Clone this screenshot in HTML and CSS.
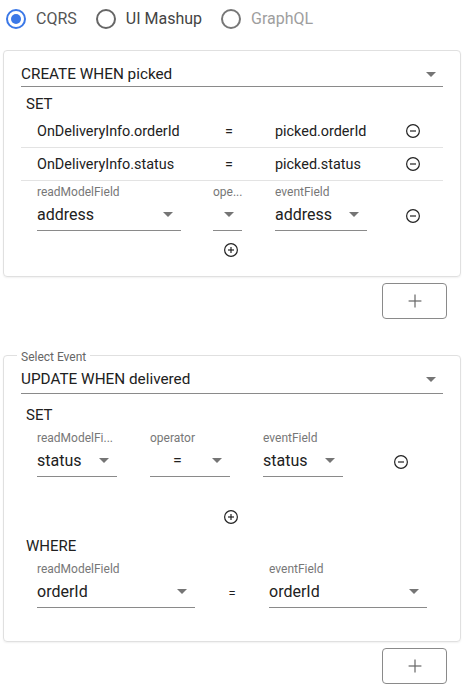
FILE: index.html
```html
<!DOCTYPE html>
<html>
<head>
<meta charset="utf-8">
<link rel="stylesheet" href="styles.css">
</head>
<body>
<div class="page">
  <div class="radios">
    <label class="radio checked"><span class="ring"><span class="dot"></span></span><span class="rlabel">CQRS</span></label>
    <label class="radio"><span class="ring"></span><span class="rlabel">UI Mashup</span></label>
    <label class="radio disabled"><span class="ring"></span><span class="rlabel">GraphQL</span></label>
  </div>

  <div class="card card1">
    <div class="select main-select"><span class="val">CREATE WHEN picked</span><span class="arrow"></span></div>
    <div class="section s1">SET</div>
    <div class="fixed-row">
      <span class="c1">OnDeliveryInfo.orderId</span><span class="c2">=</span><span class="c3">picked.orderId</span>
      <svg class="icon" viewBox="0 0 24 24"><circle cx="12" cy="12" r="8.5"/><line x1="8" y1="12" x2="16" y2="12"/></svg>
    </div>
    <div class="fixed-row">
      <span class="c1">OnDeliveryInfo.status</span><span class="c2">=</span><span class="c3">picked.status</span>
      <svg class="icon" viewBox="0 0 24 24"><circle cx="12" cy="12" r="8.5"/><line x1="8" y1="12" x2="16" y2="12"/></svg>
    </div>
    <div class="edit-row er1">
      <div class="field w144"><div class="flabel">readModelField</div><div class="fsel"><span>address</span><span class="arrow"></span></div></div>
      <div class="field w29"><div class="flabel">ope...</div><div class="fsel"><span></span><span class="arrow"></span></div></div>
      <div class="field w92"><div class="flabel">eventField</div><div class="fsel"><span>address</span><span class="arrow"></span></div></div>
      <svg class="icon eicon" viewBox="0 0 24 24"><circle cx="12" cy="12" r="8.5"/><line x1="8" y1="12" x2="16" y2="12"/></svg>
    </div>
    <div class="add-row a1"><svg class="icon" viewBox="0 0 24 24"><circle cx="12" cy="12" r="8.5"/><line x1="8" y1="12" x2="16" y2="12"/><line x1="12" y1="8" x2="12" y2="16"/></svg></div>
  </div>
  <div class="btn-row"><button class="add-btn"><svg viewBox="0 0 20 20"><line x1="2" y1="10" x2="18" y2="10"/><line x1="10" y1="2" x2="10" y2="18"/></svg></button></div>

  <div class="card card2">
    <div class="legend">Select Event</div>
    <div class="select main-select ms2"><span class="val">UPDATE WHEN delivered</span><span class="arrow"></span></div>
    <div class="section s2">SET</div>
    <div class="edit-row er2">
      <div class="field w80"><div class="flabel">readModelFi...</div><div class="fsel"><span>status</span><span class="arrow"></span></div></div>
      <div class="field w80"><div class="flabel">operator</div><div class="fsel center"><span>=</span><span class="arrow"></span></div></div>
      <div class="field w80"><div class="flabel">eventField</div><div class="fsel"><span>status</span><span class="arrow"></span></div></div>
      <svg class="icon eicon2" viewBox="0 0 24 24"><circle cx="12" cy="12" r="8.5"/><line x1="8" y1="12" x2="16" y2="12"/></svg>
    </div>
    <div class="add-row a2"><svg class="icon" viewBox="0 0 24 24"><circle cx="12" cy="12" r="8.5"/><line x1="8" y1="12" x2="16" y2="12"/><line x1="12" y1="8" x2="12" y2="16"/></svg></div>
    <div class="section s3">WHERE</div>
    <div class="edit-row er3">
      <div class="field w158"><div class="flabel">readModelField</div><div class="fsel"><span>orderId</span><span class="arrow"></span></div></div>
      <div class="eq">=</div>
      <div class="field w158"><div class="flabel">eventField</div><div class="fsel"><span>orderId</span><span class="arrow"></span></div></div>
    </div>
  </div>
  <div class="btn-row"><button class="add-btn"><svg viewBox="0 0 20 20"><line x1="2" y1="10" x2="18" y2="10"/><line x1="10" y1="2" x2="10" y2="18"/></svg></button></div>
</div>
</body>
</html>
```

FILE: styles.css
```css
* { box-sizing: border-box; }
body {
  margin: 0;
  font-family: Roboto, "Noto Sans", sans-serif;
  color: #212121;
  background: #fff;
}
.page { padding: 0 13px 0 3px; }

.radios {
  display: flex;
  align-items: center;
  height: 37px;
  padding-left: 3px;
}
.radio {
  display: flex;
  align-items: center;
  margin-right: 19px;
  font-size: 16px;
  color: #555;
}
.ring {
  width: 20px;
  height: 20px;
  border: 2px solid #666;
  border-radius: 50%;
  display: flex;
  align-items: center;
  justify-content: center;
}
.radio.checked .ring { border-color: #3b78e7; }
.dot { width: 10px; height: 10px; border-radius: 50%; background: #3b78e7; }
.rlabel { margin-left: 10px; }
.radio.disabled { color: #9e9e9e; }
.radio.disabled .ring { border-color: #777; }
.radio:nth-child(2) .rlabel { color: #444; }

.card {
  border: 1px solid #e0e0e0;
  border-radius: 4px;
  box-shadow: 0 1px 2px rgba(0,0,0,0.06);
  padding: 0 17px;
  position: relative;
}
.card1 { margin-top: 13px; height: 227px; padding-top: 10px; }
.card2 { margin-top: 36px; height: 287px; padding-top: 12px; }

.legend {
  position: absolute;
  top: -6px;
  left: 13px;
  padding: 0 4px;
  background: #fff;
  font-size: 12px;
  line-height: 14px;
  color: #666;
}

.select {
  display: flex;
  align-items: center;
  justify-content: space-between;
  border-bottom: 1px solid #8a8a8a;
}
.main-select { height: 26px; font-size: 15.3px; padding-right: 7px; }
.card1 .main-select { padding-top: 1px; }
.ms2 { padding-bottom: 3px; }
.arrow {
  width: 0; height: 0;
  border-left: 5px solid transparent;
  border-right: 5px solid transparent;
  border-top: 5px solid #757575;
}
.section {
  font-size: 15px;
  line-height: 18px;
  padding-left: 5px;
  display: flex;
  align-items: flex-end;
}
.s1 { height: 28px; padding-bottom: 2px; }
.s2 { height: 35px; padding-bottom: 5px; }
.s3 { height: 28px; }

.fixed-row {
  display: flex;
  align-items: center;
  height: 33px;
  border-bottom: 1px solid #e3e3e3;
  font-size: 14.4px;
  padding-left: 16px;
}
.fixed-row .c1 { width: 176px; }
.fixed-row .c2 { width: 62px; padding-left: 12px; }
.fixed-row .c3 { width: 129px; }
.icon {
  width: 18px; height: 18px;
  fill: none;
  stroke: #222;
  stroke-width: 1.6;
}

.edit-row { display: flex; align-items: flex-start; padding-left: 16px; }
.field { display: flex; flex-direction: column; }
.flabel { font-size: 12px; color: #777; height: 18px; line-height: 18px; white-space: nowrap; }
.fsel {
  display: flex;
  align-items: center;
  justify-content: space-between;
  height: 30px;
  border-bottom: 1px solid #8a8a8a;
  font-size: 16px;
  padding-right: 8px;
  padding-bottom: 3px;
}
.fsel.center span:first-child { padding-left: 23px; }
.w144 { width: 144px; margin-right: 32px; }
.w29 { width: 29px; margin-right: 33px; }
.w92 { width: 92px; }
.w80 { width: 80px; margin-right: 33px; }
.w80:nth-child(3) { margin-right: 0; }
.w158 { width: 158px; }
.er1 { padding-top: 2px; height: 50px; }
.eicon { margin-left: 37px; margin-top: 24px; }
.eicon2 { margin-left: 49px; margin-top: 24px; }
.er2 { height: 48px; }
.er3 { padding-top: 5px; }
.eq { width: 74px; text-align: center; font-size: 13px; line-height: 15px; padding-top: 26px; }

.add-row { display: flex; justify-content: center; padding-right: 2px; align-items: flex-end; }
.a1 { height: 29px; padding-bottom: 1px; }
.a2 { height: 50px; padding-bottom: 1px; }

.btn-row { display: flex; justify-content: flex-end; padding-right: 14px; margin-top: 6px; }
.add-btn {
  width: 65px; height: 36px;
  border: 1px solid #8a8a8a;
  border-radius: 4px;
  background: #fff;
  display: flex;
  align-items: center;
  justify-content: center;
  padding: 0;
}
.add-btn svg { width: 16px; height: 16px; stroke: #666; stroke-width: 1.5; }
```
